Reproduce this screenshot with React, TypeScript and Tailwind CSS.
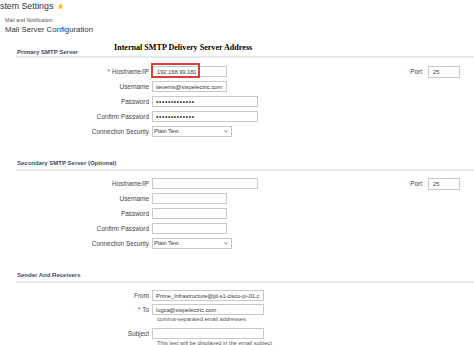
import React from "react";

const F = { fontFamily: '"Liberation Sans", Arial, sans-serif' };

function Label({ text, req }: { text: string; req?: boolean }) {
  return (
    <div className="w-[149px] shrink-0 text-right text-[6.4px] leading-[8px] text-[#444]">
      {req && <span className="text-[#c0392b]">* </span>}
      {text}
    </div>
  );
}

function TextBox({ w, value }: { w: string; value?: string }) {
  return (
    <input
      readOnly
      type="text"
      defaultValue={value ?? ""}
      className={`${w} ml-[3px] h-[11px] shrink-0 border border-[#c8c8c8] bg-white px-[3px] text-[5.7px] leading-[9px] text-[#333] outline-none`}
    />
  );
}

function PwBox() {
  return (
    <div className="ml-[3px] flex h-[11px] w-[106px] shrink-0 items-center border border-[#c8c8c8] bg-white px-[3px] text-[#333]">
      <span className="text-[6.5px] leading-[9px] tracking-[0.7px]">•••••••••••••</span>
    </div>
  );
}

function SelectBox() {
  return (
    <div className="ml-[3px] flex h-[11px] w-[80px] shrink-0 items-center justify-between border border-[#c8c8c8] bg-white pl-[1px] pr-[3px] text-[5.7px] leading-[9px] text-[#333]">
      <span>Plain Text</span>
      <svg width="4" height="3" viewBox="0 0 4 3">
        <path d="M0.3 0.4 L2 2.3 L3.7 0.4" fill="none" stroke="#555" strokeWidth="0.7" />
      </svg>
    </div>
  );
}

function Port() {
  return (
    <>
      <div className="flex-1" />
      <div className="text-[6.4px] leading-[8px] text-[#444]">Port</div>
      <input
        readOnly
        defaultValue="25"
        className="ml-[6px] mr-[14px] h-[12px] w-[32px] shrink-0 border border-[#c8c8c8] bg-white px-[4px] text-[5.7px] leading-[9px] text-[#333] outline-none"
      />
    </>
  );
}

function Row({ children }: { children: React.ReactNode }) {
  return <div className="flex h-[15px] items-center">{children}</div>;
}

function Header({ text, mt }: { text: string; mt: string }) {
  return (
    <>
      <div className={`${mt} pl-[17px] text-[6px] font-bold leading-[6px] text-[#3b4a66]`}>{text}</div>
      <div className="ml-[16px] mt-[3px] h-[2px] bg-[#e3ebf0]" />
    </>
  );
}

export default function App() {
  return (
    <div className="h-[345px] w-[474px] overflow-hidden bg-white" style={F}>
      <div className="flex items-center">
        <span className="text-[8.8px] leading-[12px] text-[#333]">stem Settings</span>
        <svg className="ml-[4px]" width="7" height="7" viewBox="0 0 24 24">
          <path
            d="M12 1.5l3.1 6.6 7.2.9-5.3 5 1.4 7.1L12 17.6l-6.4 3.5 1.4-7.1-5.3-5 7.2-.9z"
            fill="#f2c114"
          />
        </svg>
      </div>
      <div className="ml-[5px] mt-[5px] text-[5.3px] leading-[6px] text-[#555]">Mail and Notification</div>
      <div className="ml-[5px] mt-[2px] text-[7.8px] leading-[9px] text-[#333]">Mail Server Configuration</div>

      <div className="mt-[9px] flex h-[13px] items-start pl-[17px]">
        <div className="mt-[6px] w-[97px] text-[6px] font-bold leading-[6px] text-[#3b4a66]">Primary SMTP Server</div>
        <div
          className="text-[8.1px] font-bold leading-[10px] text-black"
          style={{ fontFamily: '"Liberation Serif", "Times New Roman", serif' }}
        >
          Internal SMTP Delivery Server Address
        </div>
      </div>
      <div className="ml-[16px] h-[2px] bg-[#e3ebf0]" />

      <div className="mt-[6px]">
        <Row>
          <Label text="Hostname/IP" req />
          <div className="relative ml-[3px] flex shrink-0">
            <input
              readOnly
              defaultValue="192.168.99.181"
              className="h-[11px] w-[75px] border border-[#c8c8c8] bg-white px-[4px] text-[5.7px] leading-[9px] text-[#333] outline-none"
            />
            <div className="pointer-events-none absolute left-[-1px] top-[-3px] h-[15px] w-[49px] border-2 border-solid border-[#e23b3b]" />
          </div>
          <Port />
        </Row>
        <Row>
          <Label text="Username" />
          <TextBox w="w-[75px]" value="itevents@stspelectric.com" />
        </Row>
        <Row>
          <Label text="Password" />
          <PwBox />
        </Row>
        <Row>
          <Label text="Confirm Password" />
          <PwBox />
        </Row>
        <Row>
          <Label text="Connection Security" />
          <SelectBox />
        </Row>
      </div>

      <Header text="Secondary SMTP Server (Optional)" mt="mt-[21px]" />
      <div className="mt-[5px]">
        <Row>
          <Label text="Hostname/IP" />
          <TextBox w="w-[106px]" />
          <Port />
        </Row>
        <Row>
          <Label text="Username" />
          <TextBox w="w-[75px]" />
        </Row>
        <Row>
          <Label text="Password" />
          <TextBox w="w-[75px]" />
        </Row>
        <Row>
          <Label text="Confirm Password" />
          <TextBox w="w-[75px]" />
        </Row>
        <Row>
          <Label text="Connection Security" />
          <SelectBox />
        </Row>
      </div>

      <Header text="Sender And Receivers" mt="mt-[21px]" />
      <div className="mt-[5px]">
        <Row>
          <Label text="From" />
          <TextBox w="w-[112px]" value="Prime_Infrastructure@jd-s1-cisco-pi-01.c" />
        </Row>
        <div className="flex h-[13px] items-center">
          <Label text="To" req />
          <TextBox w="w-[112px]" value="lugca@stspelectric.com" />
        </div>
        <div className="pl-[157px] text-[5.7px] leading-[7px] text-[#555]">comma-separated email addresses</div>
        <div className="mt-[4px] flex h-[13px] items-center">
          <Label text="Subject" />
          <TextBox w="w-[112px]" />
        </div>
        <div className="pl-[157px] text-[5.7px] leading-[7px] text-[#555]">This text will be displayed in the email subject</div>
      </div>
    </div>
  );
}
